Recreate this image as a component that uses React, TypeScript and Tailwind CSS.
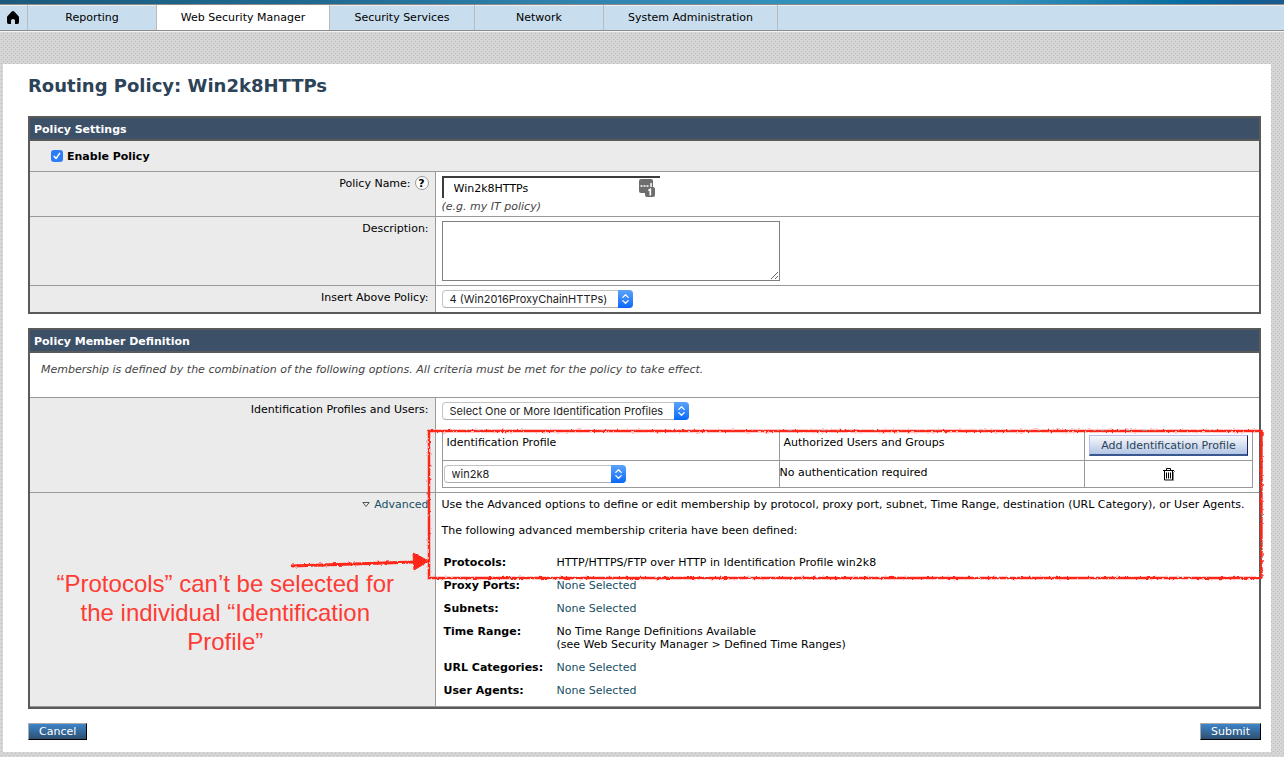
import { ReactNode } from "react";

interface SelectProps {
  id: string;
  label?: string;
  value: string;
  className: string;
}

interface FieldRowProps {
  label: ReactNode;
  children: ReactNode;
  className?: string;
}

const tabs = [
  { name: "Reporting", width: "w-[129px]" },
  { name: "Web Security Manager", width: "w-[173px]", active: true },
  { name: "Security Services", width: "w-[145px]" },
  { name: "Network", width: "w-[129px]" },
  { name: "System Administration", width: "w-[174px]" },
];

const criteria = [
  { name: "Protocols:", value: "HTTP/HTTPS/FTP over HTTP in Identification Profile win2k8" },
  { name: "Proxy Ports:", value: "None Selected", link: true },
  { name: "Subnets:", value: "None Selected", link: true },
  { name: "Time Range:", value: "No Time Range Definitions Available", note: "(see Web Security Manager > Defined Time Ranges)" },
  { name: "URL Categories:", value: "None Selected", link: true },
  { name: "User Agents:", value: "None Selected", link: true },
];

function Select({ id, label, value, className }: SelectProps) {
  return (
    <div className={`relative h-[18px] ${className}`}>
      <select
        id={id}
        aria-label={label}
        className="block h-full w-full appearance-none rounded border border-[#c3c3c3] border-b-[#adadad] bg-white pl-[7px] font-['Inter',sans-serif] text-[11px] leading-4 text-[#222]"
      >
        <option>{value}</option>
      </select>
      <span className="pointer-events-none absolute inset-y-0 right-0 flex w-[15px] items-center justify-center rounded-r bg-linear-to-b from-[#5ba3fa] to-[#0467f9]">
        <svg width="9" height="12" viewBox="0 0 9 12" fill="none" stroke="#fff" strokeWidth="1.3" strokeLinecap="round" strokeLinejoin="round">
          <path d="M1.8 4.4 4.5 1.8 7.2 4.4M1.8 7.6 4.5 10.2 7.2 7.6" />
        </svg>
      </span>
    </div>
  );
}

function Panel({ title, children }: { title: string; children: ReactNode }) {
  return (
    <section className="relative border-2 border-[#5a5a5a]">
      <h2 className="h-[23px] border-b-2 border-[#5a5a5a] bg-[#3c5068] px-1 text-[11px] leading-[23px] font-bold text-white">{title}</h2>
      <div className="divide-y divide-[#999]">{children}</div>
    </section>
  );
}

function FieldRow({ label, children, className = "" }: FieldRowProps) {
  return (
    <div className={`flex ${className}`}>
      <div className="w-[33%] shrink-0 border-r border-[#999] bg-[#ebebeb] pt-1 pr-[6px] text-right">{label}</div>
      <div className="min-w-0 flex-1 px-[6px]">{children}</div>
    </div>
  );
}

function FooterButton({ children }: { children: ReactNode }) {
  return (
    <button className="h-[17px] border border-t-[#aaa] border-r-black border-b-black border-l-[#aaa] bg-linear-to-b from-[#3d85cb] to-[#2d5070] px-[10px] text-[11px] leading-4 text-white">
      {children}
    </button>
  );
}

function RoughFilter({ id }: { id: string }) {
  return (
    <filter id={id} x="-5%" y="-20%" width="110%" height="140%">
      <feTurbulence type="fractalNoise" baseFrequency="0.35" numOctaves="2" seed="4" />
      <feDisplacementMap in="SourceGraphic" scale="3" xChannelSelector="R" yChannelSelector="G" />
    </filter>
  );
}

export default function App() {
  return (
    <div className="flex min-h-screen flex-col bg-[#d6d6d6] bg-[conic-gradient(at_1px_1px,transparent_75%,#b8b8b8_0),conic-gradient(at_1px_1px,transparent_75%,#b8b8b8_0)] bg-[size:4px_4px] bg-[position:3px_1px,1px_3px] font-['Verdana','DejaVu_Sans',sans-serif] text-[11px] leading-[13px] text-black">
      <div className="h-1 bg-[linear-gradient(90deg,#1b5a7d,#1f6a91_25%,#2f80ab_42%,#3390bb_60%,#3390bb_78%,#1b7cac_86%,#086da0_92%,#0f5f98_96%,#1b5a8c)]" />
      <nav className="flex h-[27px] border-y border-[#8c8c8c] bg-[#c8dded] shadow-[inset_0_1px_0_#eee,0_1px_0_#f2f2f2]">
        <a href="#home" aria-label="Home" className="flex w-7 items-center justify-center border-r border-[#bbb] pr-[2px]">
          <svg width="12" height="13" viewBox="0 0 12 13">
            <path d="M6 0Q5.300 0 4.800.6L.4 5.200Q0 5.700 0 6.400v4.900Q0 13 1.500 13H4V9.600Q4 8 6 8T8 9.600V13h2.500Q12 13 12 11.300V6.400q0-.7-.4-1.200L7.200.6Q6.700 0 6 0Z" />
          </svg>
        </a>
        {tabs.map((tab) => (
          <a
            key={tab.name}
            href="#tab"
            className={`${tab.width} border-r border-[#bbb] pt-px text-center leading-6 ${tab.active ? "bg-white" : ""}`}
          >
            {tab.name}
          </a>
        ))}
      </nav>

      <main className="mt-[33px] mr-[13px] mb-[5px] ml-[3px] bg-white pr-[10px] pb-3 pl-[25px]">
        <h1 className="pt-[10px] pb-[18px] text-lg leading-6 font-bold text-[#2c4358]">Routing Policy: Win2k8HTTPs</h1>

        <Panel title="Policy Settings">
          <div className="flex h-[31px] items-center bg-[#ebebeb] pl-[21px]">
            <input id="enable" type="checkbox" defaultChecked className="peer sr-only" />
            <label htmlFor="enable" className="flex items-center gap-1 font-bold">
              <span className="flex size-3 items-center justify-center rounded-[3px] bg-[#2a7df6]">
                <svg width="8" height="8" viewBox="0 0 8 8" fill="none" stroke="#fff" strokeWidth="1.5" strokeLinecap="round" strokeLinejoin="round">
                  <path d="M1.2 4.4 3.1 6.5 6.6 1.3" />
                </svg>
              </span>
              Enable Policy
            </label>
          </div>
          <FieldRow
            className="h-[45px]"
            label={
              <div className="flex items-start justify-end gap-1">
                <label htmlFor="policy-name" className="pt-px">Policy Name:</label>
                <button aria-label="Help" className="flex size-[14px] items-center justify-center rounded-full border border-[#999] bg-white text-[11px] font-bold">
                  ?
                </button>
              </div>
            }
          >
            <div className="relative mt-1 w-[218px]">
              <input
                id="policy-name"
                defaultValue="Win2k8HTTPs"
                className="block h-[22px] w-full border-t-2 border-l-2 border-[#3c3c3c] bg-white pl-[10px] text-[11px]"
              />
              <svg className="absolute top-[3px] right-[5px]" width="16" height="18" viewBox="0 0 16 18">
                <rect width="14" height="14" rx="2" fill="#6e6e6e" />
                <path d="M1.500 7h2M4.500 7h2M7.500 7h2M12 4v5" stroke="#fff" strokeWidth="1.5" />
                <rect x="6" y="8" width="10" height="10" rx="2" fill="#6e6e6e" />
                <path d="m9.300 11.500 2-1V16.500" stroke="#fff" strokeWidth="1.700" fill="none" />
              </svg>
            </div>
            <p className="pt-[2px] text-[#444] italic">(e.g. my IT policy)</p>
          </FieldRow>
          <FieldRow className="h-[69px]" label={<label htmlFor="description" className="block pt-px">Description:</label>}>
            <textarea id="description" className="mt-1 block h-[60px] w-[338px] border border-[#808080] bg-white" />
          </FieldRow>
          <FieldRow className="h-[26px]" label={<label htmlFor="insert-above" className="block pt-px">Insert Above Policy:</label>}>
            <Select id="insert-above" value="4 (Win2016ProxyChainHTTPs)" className="mt-1 w-[191px]" />
          </FieldRow>
        </Panel>

        <div className="mt-[14px]">
          <Panel title="Policy Member Definition">
            <p className="h-[45px] px-[11px] pt-[10px] text-[#444] italic">
              Membership is defined by the combination of the following options. All criteria must be met for the policy to take effect.
            </p>
            <FieldRow className="h-[95px]" label={<label htmlFor="profiles" className="block pt-px">Identification Profiles and Users:</label>}>
              <Select id="profiles" value="Select One or More Identification Profiles" className="mt-1 w-[247px]" />
              <table className="mt-[10px] w-full table-fixed border-collapse border border-[#999] text-left [&_td]:border [&_td]:border-[#999] [&_th]:border [&_th]:border-[#999] [&_th]:font-normal">
                <thead>
                  <tr className="h-[30px] align-top">
                    <th className="w-[337px] px-1 pt-[5px]">Identification Profile</th>
                    <th className="px-1 pt-[5px]">Authorized Users and Groups</th>
                    <th className="w-[168px] px-1 pt-1">
                      <button className="block h-[21px] w-full border border-t-[#b9bdf0] border-r-[#20205c] border-b-2 border-b-[#3a5890] border-l-[#b9bdf0] bg-linear-to-b from-[#f8f9fc] to-[#b3c6e4] text-[11px] text-[#2c4358]">
                        Add Identification Profile
                      </button>
                    </th>
                  </tr>
                </thead>
                <tbody>
                  <tr className="h-[27px] align-top">
                    <td className="pt-1 pl-px">
                      <Select id="profile" label="Identification Profile" value="win2k8" className="w-[182px]" />
                    </td>
                    <td className="pt-[5px]">No authentication required</td>
                    <td className="pt-[7px]">
                      <button aria-label="Delete" className="mx-auto block">
                        <svg width="12" height="13" viewBox="0 0 12 13" fill="none" stroke="#000">
                          <path d="M3.5 2V.5h4V2M0 2.5h11M1.5 3v9h8V3M3.5 4.5v6M5.5 4.5v6M7.5 4.5v6" />
                          <path d="M11.5 3v1M10.5 4v8.5H2" stroke="#888" />
                        </svg>
                      </button>
                    </td>
                  </tr>
                </tbody>
              </table>
            </FieldRow>
            <FieldRow
              label={
                <a href="#advanced" className="inline-flex items-center gap-1 pt-px text-[#174f66]">
                  <svg width="8" height="6" viewBox="0 0 8 6" fill="none" stroke="#555">
                    <path d="M.8.5h6.4L4 4.5Z" />
                  </svg>
                  Advanced
                </a>
              }
            >
              <p className="pt-[5px] whitespace-nowrap">
                Use the Advanced options to define or edit membership by protocol, proxy port, subnet, Time Range, destination (URL Category), or User Agents.
              </p>
              <p className="pt-[13px]">The following advanced membership criteria have been defined:</p>
              <dl className="flex flex-col gap-[10px] px-[2px] pt-[19px] pb-[9px]">
                {criteria.map((item) => (
                  <div key={item.name} className="flex">
                    <dt className="w-[113px] font-bold">{item.name}</dt>
                    <dd>
                      {item.link ? <a href="#edit" className="text-[#174f66]">{item.value}</a> : item.value}
                      {item.note && <div>{item.note}</div>}
                    </dd>
                  </div>
                ))}
              </dl>
            </FieldRow>

            {/* Hand-drawn callout over the form */}
            <div className="pointer-events-none absolute top-[100px] -right-px left-[calc(33%-8px)] h-[149px] border-0">
              <svg className="size-full overflow-visible">
                <RoughFilter id="rough-box" />
                <rect x="1" y="1" width="100%" height="147" fill="none" stroke="#fe2519" strokeWidth="2.5" filter="url(#rough-box)" />
              </svg>
            </div>
            <div className="pointer-events-none absolute top-[221px] left-0 flex w-[33%] flex-col items-end border-0">
              <svg className="mr-[7px] overflow-visible" width="138" height="18" viewBox="0 0 138 18">
                <RoughFilter id="rough-arrow" />
                <g fill="#fe2519" stroke="#fe2519" filter="url(#rough-arrow)">
                  <path d="M0 15 124 11" strokeWidth="3" />
                  <path d="M122 2 138 10 123 19Z" />
                </g>
              </svg>
              <p className="w-full pr-[15px] text-center font-['Liberation_Sans',sans-serif] text-2xl leading-[29px] text-[#fe3b35]">
                “Protocols” can’t be selected for<br />the individual “Identification<br />Profile”
              </p>
            </div>
          </Panel>
        </div>

        <div className="mt-[14px] flex justify-between">
          <FooterButton>Cancel</FooterButton>
          <FooterButton>Submit</FooterButton>
        </div>
      </main>
    </div>
  );
}
